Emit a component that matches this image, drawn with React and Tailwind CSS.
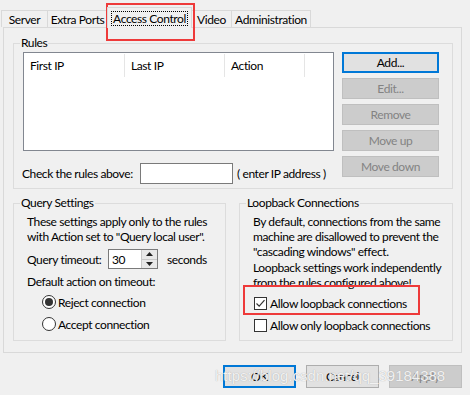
import React from "react";

const Group = ({ label, className, children }) => (
  <div className={`relative border border-[#dcdcdc] ${className}`}>
    <span className="absolute -top-[9px] left-[6px] bg-[#f0f0f0] px-[1px] leading-[15px]">
      {label}
    </span>
    {children}
  </div>
);

const WinButton = ({ children, primary, disabled, className }) => (
  <div
    className={`flex items-center justify-center ${className} ${
      primary
        ? "border-2 border-[#0078d7] bg-[#e1e1e1]"
        : disabled
        ? "border border-[#bfbfbf] bg-[#cccccc] text-[#838383]"
        : "border border-[#adadad] bg-[#e1e1e1]"
    }`}
  >
    {children}
  </div>
);

const Radio = ({ checked, label }) => (
  <div className="flex h-[22px] items-center">
    <span className="flex h-[14px] w-[14px] items-center justify-center rounded-full border border-[#333] bg-white">
      {checked && <span className="h-[8px] w-[8px] rounded-full bg-[#333]" />}
    </span>
    <span className="ml-[2px]">{label}</span>
  </div>
);

const Check = ({ checked, label }) => (
  <div className="flex h-[22px] items-center">
    <span className="ml-[1px] flex h-[13px] w-[13px] items-center justify-center border border-[#333] bg-white">
      {checked && (
        <svg width="11" height="11" viewBox="0 0 11 11">
          <path d="M1.5 5.5 L4.2 8.2 L9.5 2.2" fill="none" stroke="#333" strokeWidth="1.2" />
        </svg>
      )}
    </span>
    <span className="ml-[3px]">{label}</span>
  </div>
);

const tabs = [
  { name: "Server", w: "w-[47px]" },
  { name: "Extra Ports", w: "w-[61px]" },
  { name: "Access Control", w: "w-[85px]", active: true },
  { name: "Video", w: "w-[41px]" },
  { name: "Administration", w: "w-[80px]" },
];

export default function App() {
  return (
    <div className="relative h-[395px] w-[470px] overflow-hidden whitespace-nowrap bg-[#f0f0f0] text-[12px] leading-[15px] tracking-[-0.4px] text-black [font-family:Lato,'Liberation_Sans',sans-serif]">
      {/* Tab strip */}
      <div className="flex h-[27px] items-end pl-[1px]">
        {tabs.map((t) =>
          t.active ? (
            <div
              key={t.name}
              className={`relative z-10 -mb-px -ml-px flex h-[21px] items-center justify-center border border-b-0 border-[#d9d9d9] bg-[#f0f0f0] ${t.w}`}
            >
              <span className="border border-dotted border-black px-[1px] leading-[13px]">
                {t.name}
              </span>
            </div>
          ) : (
            <div
              key={t.name}
              className={`-ml-px flex h-[17px] items-center justify-center border border-b-0 border-[#d9d9d9] bg-[#f0f0f0] first:ml-0 ${t.w}`}
            >
              {t.name}
            </div>
          )
        )}
      </div>

      {/* Tab panel */}
      <div className="ml-[3px] h-[326px] w-[459px] border border-[#d9d9d9]">
        <Group label="Rules" className="ml-[9px] mt-[15px] h-[146px] w-[440px]">
          <div className="flex pl-[9px] pt-[8px]">
            <div className="flex w-[311px] flex-col">
              <div className="h-[99px] w-[311px] border border-[#828790] bg-white">
                <div className="flex h-[24px] items-center">
                  <div className="flex h-[23px] w-[101px] items-center border-r border-[#e5e5e5] pl-[6px]">
                    First IP
                  </div>
                  <div className="flex h-[23px] w-[100px] items-center border-r border-[#e5e5e5] pl-[6px]">
                    Last IP
                  </div>
                  <div className="flex h-[23px] w-[80px] items-center border-r border-[#e5e5e5] pl-[6px]">
                    Action
                  </div>
                </div>
              </div>
              <div className="-ml-px mt-[12px] flex items-center">
                <span className="w-[118px]">Check the rules above:</span>
                <div className="h-[21px] w-[93px] border border-[#7a7a7a] bg-white" />
                <span className="ml-[4px]">( enter IP address )</span>
              </div>
            </div>
            <div className="ml-[8px] flex flex-col gap-[5px]">
              <WinButton primary className="h-[21px] w-[97px]">Add...</WinButton>
              <WinButton disabled className="h-[21px] w-[97px]">Edit...</WinButton>
              <WinButton disabled className="h-[21px] w-[97px]">Remove</WinButton>
              <WinButton disabled className="h-[21px] w-[97px]">Move up</WinButton>
              <WinButton disabled className="h-[21px] w-[97px]">Move down</WinButton>
            </div>
          </div>
        </Group>

        <div className="ml-[9px] mt-[14px] flex gap-[13px]">
          <Group label="Query Settings" className="h-[138px] w-[213px]">
            <div className="px-[13px] pt-[10px]">
              <p>
                These settings apply only to the rules
                <br />
                with Action set to "Query local user".
              </p>
              <div className="mt-[5px] flex h-[20px] items-center">
                <span className="w-[81px]">Query timeout:</span>
                <div className="flex h-[20px] w-[50px] border border-[#7a7a7a] bg-white">
                  <span className="flex flex-1 items-center pl-[3px]">30</span>
                  <div className="flex w-[16px] flex-col border-l border-[#c8c8c8] bg-[#e8e8e8]">
                    <div className="flex flex-1 items-center justify-center border-b border-[#c8c8c8]">
                      <svg width="7" height="4" viewBox="0 0 7 4">
                        <path d="M0 4 L3.5 0 L7 4 Z" fill="#222" />
                      </svg>
                    </div>
                    <div className="flex flex-1 items-center justify-center">
                      <svg width="7" height="4" viewBox="0 0 7 4">
                        <path d="M0 0 L3.5 4 L7 0 Z" fill="#222" />
                      </svg>
                    </div>
                  </div>
                </div>
                <span className="ml-[9px]">seconds</span>
              </div>
              <p className="mt-[5px]">Default action on timeout:</p>
              <div className="ml-[15px] mt-[2px]">
                <Radio checked label="Reject connection" />
                <Radio label="Accept connection" />
              </div>
            </div>
          </Group>

          <Group label="Loopback Connections" className="h-[138px] w-[214px]">
            <div className="px-[13px] pt-[10px]">
              <p>
                By default, connections from the same
                <br />
                machine are disallowed to prevent the
                <br />
                "cascading windows" effect.
              </p>
              <p className="mt-[1px]">
                Loopback settings work independently
                <br />
                from the rules configured above!
              </p>
              <div className="mt-[2px]">
                <Check checked label="Allow loopback connections" />
                <Check label="Allow only loopback connections" />
              </div>
            </div>
            <div className="absolute left-[3px] top-[81px] h-[30px] w-[177px] border-2 border-[#ee3a3a]" />
          </Group>
        </div>
      </div>

      {/* Dialog buttons */}
      <div className="ml-[223px] mt-[12px] flex gap-[10px]">
        <WinButton primary className="h-[23px] w-[73px]">OK</WinButton>
        <WinButton className="h-[23px] w-[73px]">Cancel</WinButton>
        <WinButton disabled className="h-[23px] w-[73px]">Apply</WinButton>
      </div>

      {/* Annotation around the active tab */}
      <div className="absolute left-[106px] top-[3px] h-[38px] w-[89px] border-2 border-[#ee3a3a]" />

      {/* Watermark */}
      <div className="pointer-events-none absolute left-[215px] top-[364px] text-[15px] leading-[24px] tracking-normal text-white/85 [font-family:'Liberation_Sans',Arial,sans-serif] [text-shadow:0_0_1px_#9a9a9a]">
        https://blog.csdn.net/qq_39184388
      </div>
    </div>
  );
}
